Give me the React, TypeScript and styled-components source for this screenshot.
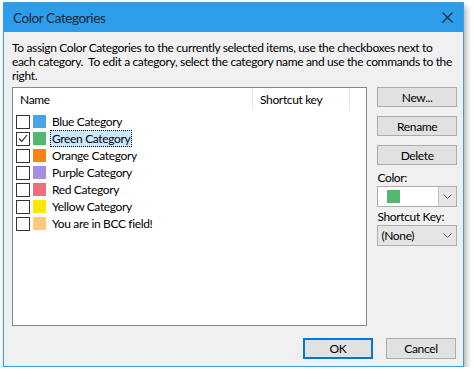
import React from "react";
import styled, { createGlobalStyle } from "styled-components";

const GlobalStyle = createGlobalStyle`
  body {
    margin: 0;
    background: #ffffff;
    font-family: Lato, "Noto Sans", "Liberation Sans", sans-serif;
    letter-spacing: -0.35px;
  }
`;

const Window = styled.div`
  margin: 2px 0 0 3px;
  width: 461px;
  height: 365px;
  border: 1px solid #3a9ee4;
  box-sizing: border-box;
  background: #f0f0f0;
  display: flex;
  flex-direction: column;
  box-shadow: 2px 4px 6px rgba(0, 0, 0, 0.35);
`;

const TitleBar = styled.div`
  flex-shrink: 0;
  height: 29px;
  background: #2b9de9;
  display: flex;
  align-items: center;
  justify-content: space-between;
  padding: 0 10px 0 9px;
  color: #14283c;
  font-size: 13.5px;
  letter-spacing: -0.4px;
`;

const Body = styled.div`
  flex: 1;
  min-height: 0;
  display: flex;
  flex-direction: column;
  padding: 9px 6px 7px 8px;
  font-size: 12px;
  color: #000;
`;

const Intro = styled.p`
  margin: 0;
  line-height: 14px;
  white-space: nowrap;
`;

const Main = styled.div`
  display: flex;
  gap: 10px;
  margin-top: 4px;
`;

const ListBox = styled.div`
  width: 357px;
  height: 239px;
  box-sizing: border-box;
  border: 1px solid #828790;
  background: #fff;
`;

const Header = styled.div`
  display: grid;
  grid-template-columns: 240px 97px;
  height: 25px;
  align-items: center;
`;

const HeadCell = styled.div`
  padding-left: 7px;
  border-right: 1px solid #e5e5e5;
  height: 22px;
  display: flex;
  align-items: center;
  align-self: start;
`;

const Row = styled.div`
  display: flex;
  align-items: center;
  height: 17px;
  padding-left: 3px;
`;

const Check = styled.span`
  width: 12px;
  height: 12px;
  border: 1px solid #333;
  background: #fff;
  display: flex;
  align-items: center;
  justify-content: center;
`;

const Swatch = styled.span<{ $c: string; $gap?: number }>`
  width: 13px;
  height: 13px;
  margin-left: ${(p) => p.$gap ?? 3}px;
  background: ${(p) => p.$c};
`;

const Label = styled.span<{ $sel?: boolean }>`
  margin-left: 4px;
  padding: 0 1px;
  line-height: 15px;
  border: 1px ${(p) => (p.$sel ? "dotted #000" : "solid transparent")};
  background: ${(p) => (p.$sel ? "#cce8ff" : "transparent")};
`;

const Side = styled.div`
  width: 80px;
  display: flex;
  flex-direction: column;
`;

const Button = styled.button<{ $primary?: boolean }>`
  height: 20px;
  box-sizing: border-box;
  border: 1px solid ${(p) => (p.$primary ? "#0078d7" : "#adadad")};
  box-shadow: ${(p) => (p.$primary ? "inset 0 0 0 1px #0078d7" : "none")};
  background: #e1e1e1;
  font: inherit;
  font-size: 12px;
  letter-spacing: -0.35px;
  color: #000;
  padding: 0;
  margin-bottom: 9px;
`;

const FieldLabel = styled.div<{ $top: number }>`
  line-height: 14px;
  margin: ${(p) => p.$top}px 0 1px;
`;

const Select = styled.div<{ $white?: boolean }>`
  height: 21px;
  box-sizing: border-box;
  border: 1px solid #adadad;
  background: ${(p) => (p.$white ? "#fff" : "#e5e5e5")};
  display: flex;
  align-items: center;
`;

const SelectValue = styled.div`
  flex: 1;
  padding-left: 3px;
  display: flex;
  align-items: center;
`;

const ArrowBox = styled.div<{ $boxed?: boolean }>`
  width: 17px;
  height: 100%;
  display: flex;
  align-items: center;
  justify-content: center;
  background: ${(p) => (p.$boxed ? "#e5e5e5" : "transparent")};
  border-left: 1px solid ${(p) => (p.$boxed ? "#c4c4c4" : "transparent")};
`;

const Footer = styled.div`
  display: flex;
  justify-content: flex-end;
  gap: 13px;
  margin-top: auto;
  padding-right: 1px;
`;

const FootButton = styled(Button)`
  width: 70px;
  height: 21px;
  margin-bottom: 0;
`;

const Chevron = () => (
  <svg width="9" height="6" viewBox="0 0 9 6">
    <path d="M0.5 0.5 L4.5 4.5 L8.5 0.5" fill="none" stroke="#555" strokeWidth="1" />
  </svg>
);

const categories = [
  { name: "Blue Category", color: "#4aa3e6" },
  { name: "Green Category", color: "#52b870", checked: true },
  { name: "Orange Category", color: "#fb8512" },
  { name: "Purple Category", color: "#a58fe0" },
  { name: "Red Category", color: "#ef6f7e" },
  { name: "Yellow Category", color: "#fde900" },
  { name: "You are in BCC field!", color: "#fdca7c" },
];

export default function App() {
  return (
    <>
      <GlobalStyle />
      <Window>
        <TitleBar>
          <span>Color Categories</span>
          <svg width="11" height="11" viewBox="0 0 11 11">
            <path d="M0.5 0.5 L10.5 10.5 M10.5 0.5 L0.5 10.5" stroke="#1b2a3a" strokeWidth="1.1" />
          </svg>
        </TitleBar>
        <Body>
          <Intro>
            To assign Color Categories to the currently selected items, use the checkboxes next to
            <br />
            each category.&nbsp; To edit a category, select the category name and use the commands to the
            <br />
            right.
          </Intro>
          <Main>
            <ListBox>
              <Header>
                <HeadCell>Name</HeadCell>
                <HeadCell>Shortcut key</HeadCell>
              </Header>
              {categories.map((c) => (
                <Row key={c.name}>
                  <Check>
                    {c.checked && (
                      <svg width="10" height="9" viewBox="0 0 10 9">
                        <path d="M1 4.5 L3.8 7.5 L9 1" fill="none" stroke="#222" strokeWidth="1.1" />
                      </svg>
                    )}
                  </Check>
                  <Swatch $c={c.color} />
                  <Label $sel={c.checked}>{c.name}</Label>
                </Row>
              ))}
            </ListBox>
            <Side>
              <Button>New...</Button>
              <Button>Rename</Button>
              <Button>Delete</Button>
              <FieldLabel $top={-3}>Color:</FieldLabel>
              <Select $white>
                <SelectValue>
                  <Swatch $c="#52b870" $gap={6} />
                </SelectValue>
                <ArrowBox $boxed>
                  <Chevron />
                </ArrowBox>
              </Select>
              <FieldLabel $top={3}>Shortcut Key:</FieldLabel>
              <Select>
                <SelectValue>(None)</SelectValue>
                <ArrowBox>
                  <Chevron />
                </ArrowBox>
              </Select>
            </Side>
          </Main>
          <Footer>
            <FootButton $primary>OK</FootButton>
            <FootButton>Cancel</FootButton>
          </Footer>
        </Body>
      </Window>
    </>
  );
}
